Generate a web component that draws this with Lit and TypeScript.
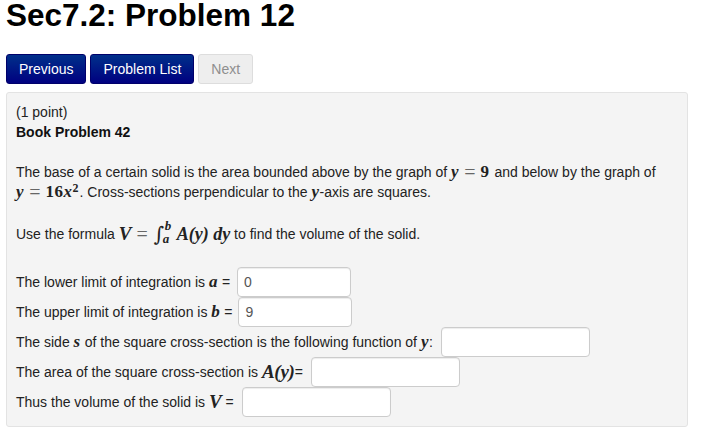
import { LitElement, html, css } from "lit";
import { customElement } from "lit/decorators.js";

@customElement("app-root")
export class AppRoot extends LitElement {
  static styles = css`
    :host { display: block; width: 725px; height: 441px; overflow: hidden; background: #fff; font-family: "Liberation Sans", Arial, sans-serif; font-size: 14px; line-height: 20px; color: #222; }
    .page { padding: 0 37px 0 6px; }
    h1 { margin: 0; font-size: 31.5px; line-height: 30px; font-weight: 700; color: #000; padding-bottom: 24px; }
    .nav { display: flex; gap: 4px; margin-bottom: 8px; }
    .btn { height: 30px; box-sizing: border-box; padding: 0 12px; display: flex; align-items: center; border-radius: 3px; border: 1px solid #00006a; color: #fff; background: linear-gradient(#00308a, #000080); }
    .btn.off { background: #eee; border-color: #ddd; color: #8f8f8f; }
    .well { box-sizing: border-box; height: 335px; padding: 9px 9px; background: #f4f4f4; border: 1px solid #e3e3e3; border-radius: 3px; }
    .gap { height: 20px; }
    .line { height: 20px; display: flex; align-items: center; white-space: pre; }
    .formula { height: 22px; margin-top: 21px; margin-bottom: 22px; display: flex; align-items: center; white-space: pre; }
    b.t { font-weight: 700; color: #111; }
    .row { height: 30px; display: flex; align-items: center; white-space: pre; }
    .m { font-family: "Liberation Serif", serif; font-style: italic; font-weight: 700; font-size: 17px; line-height: 16px; color: #222; letter-spacing: 0.6px; }
    .m.big { font-size: 19px; letter-spacing: 0; }
    .m.mid { font-size: 18px; letter-spacing: 0; }
    .m.area { letter-spacing: -0.25px; }
    .n { font-family: "Liberation Serif", serif; font-size: 17px; line-height: 16px; font-weight: 700; color: #222; letter-spacing: 0.5px; }
    .n.nine { margin-right: 1px; }
    .eq { font-family: "Liberation Serif", serif; font-size: 20px; line-height: 16px; color: #666; padding: 0 5px; }
    sup { font-size: 12px; line-height: 10px; font-family: "Liberation Serif", serif; font-weight: 700; margin: 0 1px 9px 0; }
    input { box-sizing: border-box; height: 30px; margin: 0 0 0 4px; padding: 4px 6px; border: 1px solid #ccc; border-radius: 4px; background: #fff; font: 14px "Liberation Sans", Arial, sans-serif; color: #555; outline: none; box-shadow: inset 0 1px 1px rgba(0,0,0,.075); }
    input.s3 { margin-left: 3px; }
    input.s2 { margin-left: 2px; }
    .w114 { width: 114px; }
    .w149 { width: 149px; }
    .int { font-family: "DejaVu Serif", serif; font-size: 20px; line-height: 20px; width: 9px; margin-left: 1px; color: #222; }
    .lim { display: inline-flex; flex-direction: column; width: 14px; font-family: "Liberation Serif", serif; font-style: italic; font-weight: 700; font-size: 13px; line-height: 10px; }
    .lim span:first-child { margin: -4px 0 0 2px; }
    .lim span:last-child { margin: 3px 0 0 0; }
  `;

  render() {
    return html`<div class="page">
      <h1>Sec7.2: Problem 12</h1>
      <div class="nav">
        <div class="btn">Previous</div>
        <div class="btn">Problem List</div>
        <div class="btn off">Next</div>
      </div>
      <div class="well">
        <div>(1 point)</div>
        <div><b class="t">Book Problem 42</b></div>
        <div class="gap"></div>
        <div class="line">The base of a certain solid is the area bounded above by the graph of <span class="m">y</span><span class="eq">=</span><span class="n nine">9</span> and below by the graph of</div>
        <div class="line"><span class="m">y</span><span class="eq">=</span><span class="n">16</span><span class="m">x</span><sup>2</sup>. Cross-sections perpendicular to the <span class="m">y</span>-axis are squares.</div>
        <div class="formula">Use the formula <span class="m big">V</span><span class="eq">=</span><span class="int">∫</span><span class="lim"><span>b</span><span>a</span></span><span class="m mid">A(y) dy</span> to find the volume of the solid.</div>
        <div class="row">The lower limit of integration is <span class="m">a</span> = <input class="w114 s3" value="0" /></div>
        <div class="row">The upper limit of integration is <span class="m">b</span> = <input class="w114 s2" value="9" /></div>
        <div class="row">The side <span class="m">s</span> of the square cross-section is the following function of <span class="m">y</span>: <input class="w149" /></div>
        <div class="row">The area of the square cross-section is <span class="m big area">A(y)</span>= <input class="w149" /></div>
        <div class="row">Thus the volume of the solid is <span class="m big">V</span> = <input class="w149" /></div>
      </div>
    </div>`;
  }
}
